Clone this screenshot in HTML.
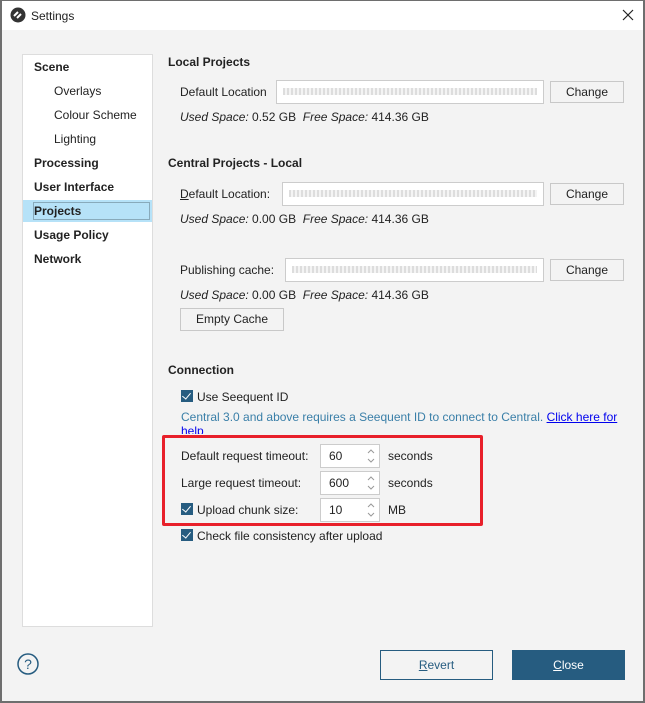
<!DOCTYPE html>
<html><head><style>
*{box-sizing:border-box;margin:0;padding:0}
body{width:645px;height:703px;background:#6e6e6e;font-family:"Liberation Sans",sans-serif;font-size:12px;color:#222;position:relative;overflow:hidden}
.win{position:absolute;left:2px;top:1px;width:641px;height:700px;background:#f3f3f3}
.title{position:absolute;left:0;top:0;width:641px;height:29px;background:#fff}
.a{position:absolute;white-space:nowrap;line-height:14px}
.b{font-weight:bold}
.side{position:absolute;left:20px;top:53px;width:131px;height:573px;background:#fff;border:1px solid #ddd}
.field{position:absolute;background:#fff;border:1px solid #ccc}
.field i{position:absolute;left:6px;right:6px;top:7px;height:7px;background:repeating-linear-gradient(90deg,#ddd 0 2px,#f4f4f4 2px 4px)}
.btn{position:absolute;background:#f3f3f3;border:1px solid #c8c8c8;text-align:center;line-height:20px;font-size:12px}
.cb{position:absolute;width:12px;height:12px;background:#265c80}
.cb::after{content:"";position:absolute;left:3px;top:1px;width:4px;height:7px;border:solid #fff;border-width:0 1.5px 1.5px 0;transform:rotate(40deg)}
.spin{position:absolute;width:60px;height:24px;background:#fff;border:1px solid #ccc;padding-left:8px;line-height:22px}
.spin svg{position:absolute;right:4px;top:3px}
</style></head><body>
<div class="win">
<div class="title">
<svg style="position:absolute;left:8px;top:6px" width="16" height="16"><circle cx="8" cy="8" r="7.5" fill="#333"/><path d="M4 9 L8 5 M7 11 L11 7" stroke="#fff" stroke-width="2"/></svg>
<div class="a" style="left:29px;top:8px;font-size:12px">Settings</div>
<svg style="position:absolute;left:620px;top:8px" width="12" height="12"><path d="M1 1L11 11M11 1L1 11" stroke="#222" stroke-width="1.2"/></svg>
</div>
<div class="side"></div>
<div style="position:absolute;left:21px;top:199px;width:129px;height:22px;background:#b6e2f8"><div style="position:absolute;left:10px;top:2px;width:117px;height:18px;border:1px solid #8ab"></div></div>
<div class="a b" style="left:32px;top:59px">Scene</div>
<div class="a" style="left:52px;top:83px">Overlays</div>
<div class="a" style="left:52px;top:107px">Colour Scheme</div>
<div class="a" style="left:52px;top:131px">Lighting</div>
<div class="a b" style="left:32px;top:155px">Processing</div>
<div class="a b" style="left:32px;top:179px">User Interface</div>
<div class="a b" style="left:32px;top:203px">Projects</div>
<div class="a b" style="left:32px;top:227px">Usage Policy</div>
<div class="a b" style="left:32px;top:251px">Network</div>

<div class="a b" style="left:166px;top:54px">Local Projects</div>
<div class="a" style="left:178px;top:84px">Default Location</div>
<div class="field" style="left:274px;top:79px;width:268px;height:24px"><i></i></div>
<div class="btn" style="left:548px;top:80px;width:74px;height:22px">Change</div>
<div class="a" style="left:178px;top:109px"><i>Used Space:</i> 0.52 GB &nbsp;<i>Free Space:</i> 414.36 GB</div>

<div class="a b" style="left:166px;top:155px">Central Projects - Local</div>
<div class="a" style="left:178px;top:186px"><u>D</u>efault Location:</div>
<div class="field" style="left:280px;top:181px;width:262px;height:24px"><i></i></div>
<div class="btn" style="left:548px;top:182px;width:74px;height:22px">Change</div>
<div class="a" style="left:178px;top:211px"><i>Used Space:</i> 0.00 GB &nbsp;<i>Free Space:</i> 414.36 GB</div>

<div class="a" style="left:178px;top:262px">Publishing cache:</div>
<div class="field" style="left:283px;top:257px;width:259px;height:24px"><i></i></div>
<div class="btn" style="left:548px;top:258px;width:74px;height:22px">Change</div>
<div class="a" style="left:178px;top:287px"><i>Used Space:</i> 0.00 GB &nbsp;<i>Free Space:</i> 414.36 GB</div>
<div class="btn" style="left:178px;top:307px;width:104px;height:23px">Empty Cache</div>

<div class="a b" style="left:166px;top:362px">Connection</div>
<div class="cb" style="left:179px;top:389px"></div>
<div class="a" style="left:195px;top:389px">Use Seequent ID</div>
<div class="a" style="left:179px;top:409px;color:#3a7fa8">Central 3.0 and above requires a Seequent ID to connect to Central. <span style="color:#00e;text-decoration:underline">Click here for</span></div>
<div class="a" style="left:179px;top:423px;color:#00e;text-decoration:underline;height:10px;overflow:hidden">help</div>

<div style="position:absolute;left:160px;top:434px;width:321px;height:91px;border:3px solid #e8202a;border-radius:2px"></div>
<div class="a" style="left:179px;top:448px">Default request timeout:</div>
<div class="spin" style="left:318px;top:443px">60<svg width="8" height="16"><path d="M1 5L4 2L7 5M1 11L4 14L7 11" fill="none" stroke="#999"/></svg></div>
<div class="a" style="left:386px;top:448px">seconds</div>
<div class="a" style="left:179px;top:475px">Large request timeout:</div>
<div class="spin" style="left:318px;top:470px">600<svg width="8" height="16"><path d="M1 5L4 2L7 5M1 11L4 14L7 11" fill="none" stroke="#999"/></svg></div>
<div class="a" style="left:386px;top:475px">seconds</div>
<div class="cb" style="left:179px;top:502px"></div>
<div class="a" style="left:195px;top:502px">Upload chunk size:</div>
<div class="spin" style="left:318px;top:497px">10<svg width="8" height="16"><path d="M1 5L4 2L7 5M1 11L4 14L7 11" fill="none" stroke="#999"/></svg></div>
<div class="a" style="left:386px;top:502px">MB</div>
<div class="cb" style="left:179px;top:528px"></div>
<div class="a" style="left:195px;top:528px">Check file consistency after upload</div>

<svg style="position:absolute;left:15px;top:652px" width="22" height="22"><circle cx="11" cy="11" r="10" fill="none" stroke="#265c80" stroke-width="1.5"/><text x="11" y="16" text-anchor="middle" font-family="Liberation Sans" font-size="14" fill="#265c80">?</text></svg>
<div style="position:absolute;left:378px;top:649px;width:113px;height:30px;border:1px solid #265c80;text-align:center;line-height:28px;color:#265c80"><u>R</u>evert</div>
<div style="position:absolute;left:510px;top:649px;width:113px;height:30px;background:#265c80;text-align:center;line-height:30px;color:#fff"><u>C</u>lose</div>
</div>
</body></html>
